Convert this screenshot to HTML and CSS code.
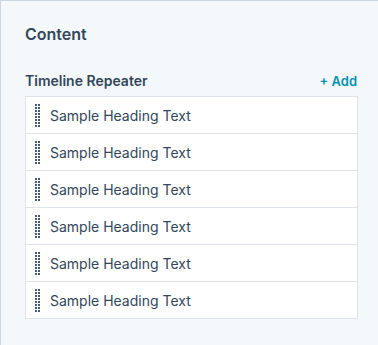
FILE: index.html
```html
<!DOCTYPE html>
<html lang="en">
<head>
    <meta charset="UTF-8">
    <title>Content</title>
    <link rel="stylesheet" href="styles.css">
</head>
<body>
    <section class="panel">
        <h2 class="panel-title">Content</h2>
        <div class="field-head">
            <span class="field-label">Timeline Repeater</span>
            <a href="#" class="btn-add">+ Add</a>
        </div>
        <ul class="repeater">
            <li class="repeater-item"><span class="handle"></span>Sample Heading Text</li>
            <li class="repeater-item"><span class="handle"></span>Sample Heading Text</li>
            <li class="repeater-item"><span class="handle"></span>Sample Heading Text</li>
            <li class="repeater-item"><span class="handle"></span>Sample Heading Text</li>
            <li class="repeater-item"><span class="handle"></span>Sample Heading Text</li>
            <li class="repeater-item"><span class="handle"></span>Sample Heading Text</li>
        </ul>
    </section>
</body>
</html>
```
FILE: styles.css
```css
* {
    margin: 0;
    padding: 0;
    box-sizing: border-box;
}

body {
    font-family: "Inter", "Noto Sans", sans-serif;
    background: #f5f8fa;
    color: #33475b;
    width: 378px;
    height: 345px;
    overflow: hidden;
}

.panel {
    height: 100%;
    border-top: 1px solid #cbd6e2;
    border-left: 1px solid #cbd6e2;
    padding: 22px 20px 0 24px;
}

.panel-title {
    font-size: 16px;
    font-weight: 600;
    line-height: 22px;
    margin-bottom: 27px;
}

.field-head {
    display: flex;
    justify-content: space-between;
    align-items: baseline;
    margin-bottom: 7px;
}

.field-label {
    font-size: 14px;
    font-weight: 600;
}

.btn-add {
    font-size: 13px;
    font-weight: 600;
    color: #0091ae;
    text-decoration: none;
    margin-right: 1px;
}

.repeater {
    list-style: none;
    background: #fff;
    border: 1px solid #dfe3eb;
}

.repeater-item {
    display: flex;
    align-items: center;
    height: 37px;
    padding-left: 9px;
    font-size: 14px;
    font-weight: 400;
    border-top: 1px solid #dfe3eb;
}

.repeater-item:first-child {
    border-top: none;
    height: 36px;
}

/* 2x2 dots on a 3px grid, two columns */
.handle {
    flex: none;
    width: 5px;
    height: 23px;
    margin-right: 10px;
    background:
        linear-gradient(#425b76 2px, transparent 2px) 0 0 / 2px 3px repeat-y,
        linear-gradient(#425b76 2px, transparent 2px) 3px 0 / 2px 3px repeat-y;
}
```
